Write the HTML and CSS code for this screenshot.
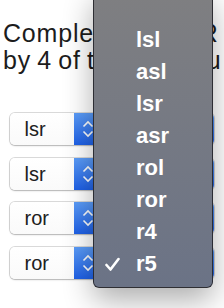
FILE: index.html
```html
<!DOCTYPE html>
<html lang="en">
<head>
  <meta charset="UTF-8">
  <meta name="viewport" content="width=device-width, initial-scale=1.0">
  <title>ROR puzzle</title>
  <link rel="stylesheet" href="styles.css">
</head>
<body>
  <main class="page">
    <p class="prompt"><span class="line-top">Complete an ROR</span><br>by 4 of the bits you</p>

    <!-- two selects per row -->
    <div class="rows">
      <div class="row">
        <div class="select"><span class="value">lsr</span><span class="arrows"><svg width="12" height="18" viewBox="0 0 12 18"><polyline points="1.5,6.5 6,2 10.5,6.5"/><polyline points="1.5,11.5 6,16 10.5,11.5"/></svg></span></div>
        <div class="select"><span class="value">lsl</span><span class="arrows"><svg width="12" height="18" viewBox="0 0 12 18"><polyline points="1.5,6.5 6,2 10.5,6.5"/><polyline points="1.5,11.5 6,16 10.5,11.5"/></svg></span></div>
      </div>
      <div class="row">
        <div class="select"><span class="value">lsr</span><span class="arrows"><svg width="12" height="18" viewBox="0 0 12 18"><polyline points="1.5,6.5 6,2 10.5,6.5"/><polyline points="1.5,11.5 6,16 10.5,11.5"/></svg></span></div>
        <div class="select"><span class="value">asl</span><span class="arrows"><svg width="12" height="18" viewBox="0 0 12 18"><polyline points="1.5,6.5 6,2 10.5,6.5"/><polyline points="1.5,11.5 6,16 10.5,11.5"/></svg></span></div>
      </div>
      <div class="row">
        <div class="select"><span class="value">ror</span><span class="arrows"><svg width="12" height="18" viewBox="0 0 12 18"><polyline points="1.5,6.5 6,2 10.5,6.5"/><polyline points="1.5,11.5 6,16 10.5,11.5"/></svg></span></div>
        <div class="select"><span class="value">r4</span><span class="arrows"><svg width="12" height="18" viewBox="0 0 12 18"><polyline points="1.5,6.5 6,2 10.5,6.5"/><polyline points="1.5,11.5 6,16 10.5,11.5"/></svg></span></div>
      </div>
      <div class="row">
        <div class="select"><span class="value">ror</span><span class="arrows"><svg width="12" height="18" viewBox="0 0 12 18"><polyline points="1.5,6.5 6,2 10.5,6.5"/><polyline points="1.5,11.5 6,16 10.5,11.5"/></svg></span></div>
        <div class="select"><span class="value">r5</span><span class="arrows"><svg width="12" height="18" viewBox="0 0 12 18"><polyline points="1.5,6.5 6,2 10.5,6.5"/><polyline points="1.5,11.5 6,16 10.5,11.5"/></svg></span></div>
      </div>
    </div>
  </main>

  <!-- open popup menu of the last select -->
  <ul class="menu">
    <li class="item"><span class="check"></span>lsl</li>
    <li class="item"><span class="check"></span>asl</li>
    <li class="item"><span class="check"></span>lsr</li>
    <li class="item"><span class="check"></span>asr</li>
    <li class="item"><span class="check"></span>rol</li>
    <li class="item"><span class="check"></span>ror</li>
    <li class="item"><span class="check"></span>r4</li>
    <li class="item"><span class="check"><svg width="15" height="15" viewBox="0 0 15 15"><polyline points="1.5,8 5.5,12.5 13.5,2"/></svg></span>r5</li>
  </ul>
</body>
</html>
```

FILE: styles.css
```css
html, body {
  margin: 0;
  padding: 0;
  overflow: hidden;
  background: #fff;
}
body {
  font-family: "Liberation Sans", Arial, sans-serif;
  color: #1c1c1c;
  width: 224px;
  height: 308px;
  position: relative;
}
.page {
  padding: 20px 0 0 0;
}
.prompt {
  margin: 0;
  padding-left: 3px;
  font-size: 25px;
  line-height: 27px;
  letter-spacing: 0.8px;
  word-spacing: -1.5px;
  white-space: nowrap;
}
.line-top {
  word-spacing: -0.3px;
}
/* selects */
.rows {
  margin-top: 39px;
  padding-left: 10px;
  display: flex;
  flex-direction: column;
  gap: 12.5px;
}
.row {
  display: flex;
  gap: 18px;
}
.select {
  display: flex;
  height: 32px;
  width: 92px;
  border-radius: 5px;
  background: linear-gradient(#fff, #fafafa);
  box-shadow: 0 0 0 1px rgba(0, 0, 0, 0.14), 0 1px 2px rgba(0, 0, 0, 0.18);
}
.select + .select {
  width: 94px;
}
.value {
  flex: 1;
  padding-left: 14.5px;
  font-size: 20px;
  line-height: 32px;
  color: #202020;
}
.arrows {
  width: 28px;
  display: flex;
  align-items: center;
  justify-content: center;
  border-radius: 0 5px 5px 0;
  background: linear-gradient(#5b9cf8, #1e60e6);
}
.arrows polyline {
  fill: none;
  stroke: #fff;
  stroke-width: 1.6;
}
/* popup menu */
.menu {
  position: absolute;
  left: 93px;
  top: -10px;
  width: 120px;
  box-sizing: border-box;
  margin: 0;
  padding: 33.4px 0 6.6px;
  list-style: none;
  border: 1px solid rgba(20, 20, 25, 0.75);
  border-radius: 6px;
  background: linear-gradient(#7f7f81, #6b7386);
  box-shadow: 0 12px 30px rgba(0, 0, 0, 0.32);
}
.item {
  display: flex;
  align-items: center;
  height: 32px;
  padding-left: 11px;
  font-size: 22px;
  font-weight: bold;
  color: #fff;
}
.check {
  width: 31px;
  display: flex;
  align-items: center;
}
.check polyline {
  fill: none;
  stroke: #fff;
  stroke-width: 2.6;
  stroke-linecap: round;
  stroke-linejoin: round;
}
```
